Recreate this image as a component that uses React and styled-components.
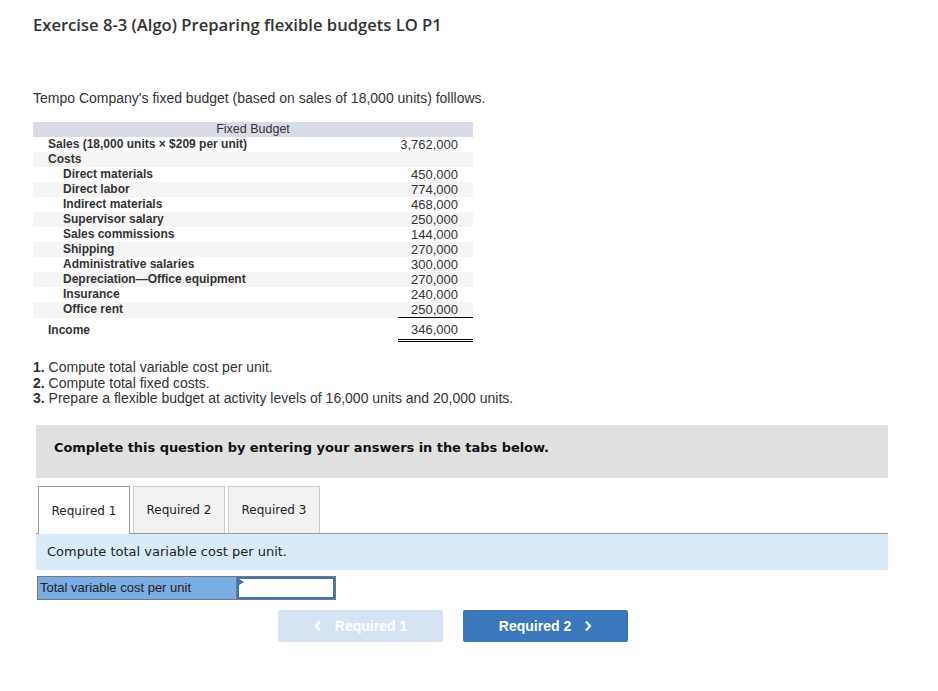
import styled, { createGlobalStyle } from 'styled-components';

const GlobalStyle = createGlobalStyle`
  body {
    margin: 0;
    background: #fff;
    font-family: "Liberation Sans", Arial, sans-serif;
    color: #333;
  }
  * {
    box-sizing: border-box;
  }
`;

const Page = styled.div`
  padding: 13px 0 40px 33px;
  width: 888px;
`;

const Title = styled.h1`
  margin: 0;
  font-family: "Open Sans", sans-serif;
  font-size: 16.6px;
  font-weight: 600;
  color: #333;
`;

const Intro = styled.p`
  margin: 53px 0 0;
  font-size: 14px;
  line-height: 18px;
`;

const BudgetTable = styled.table`
  margin-top: 15px;
  width: 440px;
  border-collapse: collapse;
  font-size: 12px;
  line-height: 15px;
`;

const HeadCell = styled.th`
  background: #d9dce6;
  font-weight: normal;
  text-align: center;
  padding: 0;
  font-size: 12.5px;
  height: 14px;
  color: #333;
`;

const Row = styled.tr`
  background: ${p => (p.$shade ? '#f5f5f5' : '#fff')};
`;

const Label = styled.td`
  padding: 0 0 0 ${p => (p.$indent ? 30 : 15)}px;
  font-weight: bold;
  color: #333;
  height: 15px;
  white-space: nowrap;
`;

const Value = styled.td`
  width: 75px;
  padding: 0 15px 0 0;
  text-align: right;
  font-size: 13px;
  color: #333;
  border-bottom: ${p => (p.$rule ? '1px solid #000' : 'none')};
  ${p => p.$double && `
    border-bottom: 3px double #000;
    padding-top: 4px;
    padding-bottom: 2px;
  `}
`;

const IncomeLabel = styled(Label)`
  padding-top: 4px;
  padding-bottom: 2px;
`;

const Steps = styled.ol`
  list-style: none;
  margin: 18px 0 0;
  padding: 0;
  font-size: 14px;
  line-height: 15.5px;
`;

const StepNum = styled.b`
  font-weight: bold;
`;

const Notice = styled.div`
  margin: 18px 0 0 3px;
  background: #e0e0e0;
  height: 53px;
  display: flex;
  align-items: center;
  padding: 0 0 8px 18px;
  font-family: "DejaVu Sans", Verdana, sans-serif;
  font-weight: bold;
  font-size: 13px;
  letter-spacing: -0.05px;
  color: #111;
`;

const TabBar = styled.div`
  margin: 8px 0 0 3px;
  display: flex;
  gap: 3px;
  padding-left: 2px;
  border-bottom: 1px solid #999;
`;

const Tab = styled.div`
  width: 92px;
  display: flex;
  align-items: center;
  justify-content: center;
  padding-top: 1px;
  font-family: "DejaVu Sans", Verdana, sans-serif;
  font-size: 12px;
  color: #222;
  background: ${p => (p.$active ? '#fff' : '#f2f2f2')};
  border: 1px solid ${p => (p.$active ? '#999' : '#ccc')};
  border-bottom: none;
  margin-bottom: ${p => (p.$active ? '-1px' : '0')};
  height: ${p => (p.$active ? '48px' : '47px')};
`;

const Prompt = styled.div`
  margin-left: 3px;
  background: #d9ebf9;
  height: 36px;
  display: flex;
  align-items: center;
  padding-left: 11px;
  font-family: "DejaVu Sans", Verdana, sans-serif;
  font-size: 13px;
  color: #222;
`;

const AnswerRow = styled.div`
  margin: 6px 0 0 4px;
  display: flex;
  width: 299px;
  height: 24px;
  border: 1px solid #777;
`;

const AnswerLabel = styled.div`
  width: 199px;
  background: #7aade3;
  border-right: 1px solid #777;
  font-size: 13px;
  display: flex;
  align-items: center;
  padding-left: 2px;
  color: #222;
`;

const AnswerBox = styled.div`
  position: relative;
  flex: 1;
  background: #fff;
  border: 2px solid #3c76b8;

  &::before {
    content: '';
    position: absolute;
    left: 0;
    top: 0;
    border-left: 5px solid #3c76b8;
    border-top: 3px solid transparent;
    border-bottom: 3px solid transparent;
  }
`;

const NavRow = styled.div`
  margin: 10px 0 0 245px;
  display: flex;
  gap: 20px;
`;

const NavButton = styled.button`
  width: 165px;
  height: 32px;
  border: none;
  border-radius: 2px;
  background: ${p => (p.$disabled ? '#d6e3f2' : '#3a77bb')};
  color: #fff;
  font-family: "Liberation Sans", Arial, sans-serif;
  font-weight: bold;
  font-size: 14px;
  display: flex;
  align-items: center;
  justify-content: center;
  gap: 13px;
  padding: 0;
`;

const Chevron = ({ dir }) => (
  <svg width="8" height="12" viewBox="0 0 8 12">
    <path
      d={dir === 'left' ? 'M6 1.5 L2 6 L6 10.5' : 'M2 1.5 L6 6 L2 10.5'}
      fill="none"
      stroke="#fff"
      strokeWidth="2.2"
    />
  </svg>
);

const costs = [
  ['Direct materials', '450,000'],
  ['Direct labor', '774,000'],
  ['Indirect materials', '468,000'],
  ['Supervisor salary', '250,000'],
  ['Sales commissions', '144,000'],
  ['Shipping', '270,000'],
  ['Administrative salaries', '300,000'],
  ['Depreciation\u2014Office equipment', '270,000'],
  ['Insurance', '240,000'],
  ['Office rent', '250,000'],
];

export default function App() {
  return (
    <Page>
      <GlobalStyle />
      <Title>Exercise 8-3 (Algo) Preparing flexible budgets LO P1</Title>
      <Intro>Tempo Company's fixed budget (based on sales of 18,000 units) folllows.</Intro>
      <BudgetTable>
        <thead>
          <tr>
            <HeadCell colSpan={2}>Fixed Budget</HeadCell>
          </tr>
        </thead>
        <tbody>
          <Row>
            <Label>Sales (18,000 units × $209 per unit)</Label>
            <Value>3,762,000</Value>
          </Row>
          <Row $shade>
            <Label>Costs</Label>
            <Value />
          </Row>
          {costs.map(([name, amt], i) => (
            <Row key={name} $shade={i % 2 === 1}>
              <Label $indent>{name}</Label>
              <Value $rule={i === costs.length - 1}>{amt}</Value>
            </Row>
          ))}
          <Row>
            <IncomeLabel>Income</IncomeLabel>
            <Value $double>346,000</Value>
          </Row>
        </tbody>
      </BudgetTable>
      <Steps>
        <li><StepNum>1.</StepNum> Compute total variable cost per unit.</li>
        <li><StepNum>2.</StepNum> Compute total fixed costs.</li>
        <li><StepNum>3.</StepNum> Prepare a flexible budget at activity levels of 16,000 units and 20,000 units.</li>
      </Steps>
      <Notice>Complete this question by entering your answers in the tabs below.</Notice>
      <TabBar>
        <Tab $active>Required 1</Tab>
        <Tab>Required 2</Tab>
        <Tab>Required 3</Tab>
      </TabBar>
      <Prompt>Compute total variable cost per unit.</Prompt>
      <AnswerRow>
        <AnswerLabel>Total variable cost per unit</AnswerLabel>
        <AnswerBox />
      </AnswerRow>
      <NavRow>
        <NavButton $disabled>
          <Chevron dir="left" />
          Required 1
        </NavButton>
        <NavButton>
          Required 2
          <Chevron dir="right" />
        </NavButton>
      </NavRow>
    </Page>
  );
}
